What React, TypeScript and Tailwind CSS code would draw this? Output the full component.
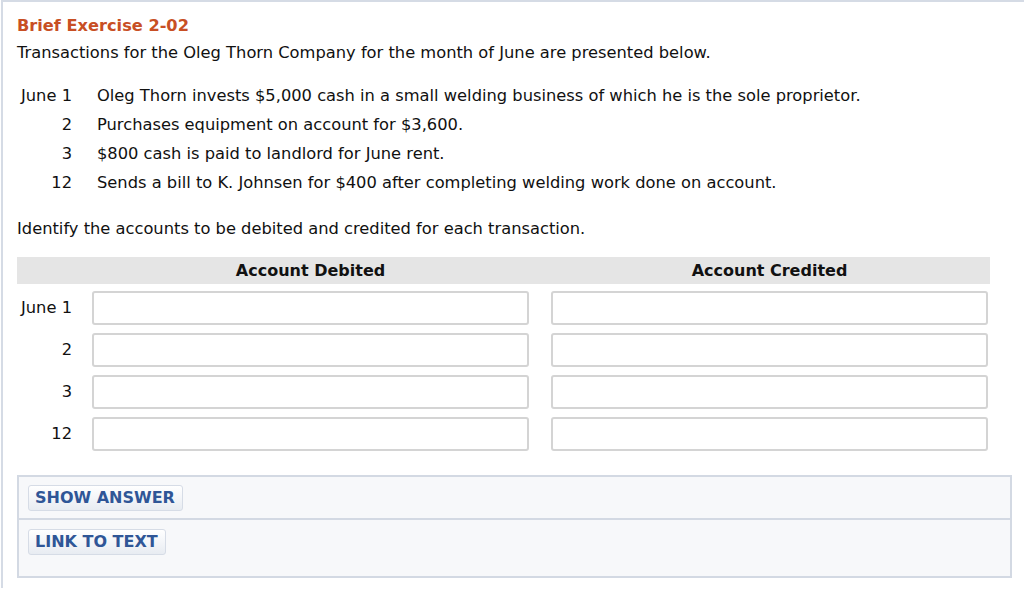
const transactions = [
  { date: "June 1", text: "Oleg Thorn invests $5,000 cash in a small welding business of which he is the sole proprietor." },
  { date: "2", text: "Purchases equipment on account for $3,600." },
  { date: "3", text: "$800 cash is paid to landlord for June rent." },
  { date: "12", text: "Sends a bill to K. Johnsen for $400 after completing welding work done on account." },
];

const rows = ["June 1", "2", "3", "12"];

const App = () => {
  return (
    <div className="min-h-[590px] bg-white font-['DejaVu_Sans',Verdana,sans-serif] text-[16.3px] text-[#111]">
      <div className="ml-[1px] pt-[14px] pl-[14px] border-l-2 border-t-2 border-[#d5dbe5] min-h-[588px] pr-[12px]">
        <h2 className="text-[16.2px] font-bold text-[#c84f24] leading-[20px]">Brief Exercise 2-02</h2>
        <p className="mt-[7px] leading-[20px]">
          Transactions for the Oleg Thorn Company for the month of June are presented below.
        </p>

        <div className="mt-[19px] flex flex-col">
          {transactions.map((t) => (
            <div key={t.date} className="flex h-[29px] items-center">
              <div className="w-[55px] text-right">{t.date}</div>
              <div className="ml-[25px]">{t.text}</div>
            </div>
          ))}
        </div>

        <p className="mt-[21px] leading-[20px]">Identify the accounts to be debited and credited for each transaction.</p>

        <div className="mt-[18px] w-[973px]">
          <div className="flex h-[27px] items-center bg-[#e5e5e5] text-[16px] font-bold">
            <div className="w-[75px]" />
            <div className="w-[437px] text-center">Account Debited</div>
            <div className="w-[22px]" />
            <div className="w-[437px] text-center">Account Credited</div>
          </div>
          <div className="mt-[7px] flex flex-col gap-[8px]">
            {rows.map((r) => (
              <div key={r} className="flex h-[34px] items-center">
                <div className="w-[55px] text-right">{r}</div>
                <div className="w-[20px]" />
                <input className="h-[34px] w-[437px] rounded-[3px] border-2 border-[#d4d4d4] bg-white" />
                <div className="w-[22px]" />
                <input className="h-[34px] w-[437px] rounded-[3px] border-2 border-[#d4d4d4] bg-white" />
              </div>
            ))}
          </div>
        </div>

        <div className="mt-[24px] w-[995px] border-2 border-[#d3d9e3] bg-[#f7f8fa]">
          <div className="h-[43px] flex items-center px-[9px] border-b-2 border-[#d3d9e3]">
            <button className="h-[26px] pl-[6px] pr-[7px] rounded-[3px] border border-[#d6dce6] bg-gradient-to-b from-white to-[#e8ecf2] text-[16px] font-bold text-[#2f5697]">
              SHOW ANSWER
            </button>
          </div>
          <div className="h-[56px] flex items-start pt-[9px] px-[9px]">
            <button className="h-[26px] pl-[6px] pr-[7px] rounded-[3px] border border-[#d6dce6] bg-gradient-to-b from-white to-[#e8ecf2] text-[16px] font-bold text-[#2f5697]">
              LINK TO TEXT
            </button>
          </div>
        </div>
      </div>
    </div>
  );
};

export default App;
